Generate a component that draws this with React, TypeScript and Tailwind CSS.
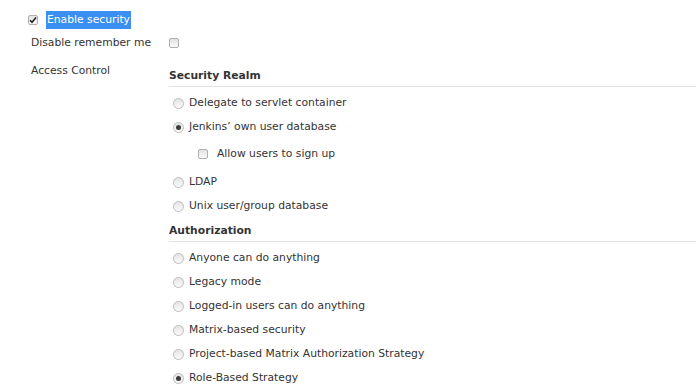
import React from "react";

const Radio = ({ checked = false }: { checked?: boolean }) => (
    <span className="inline-flex h-[11px] w-[11px] shrink-0 items-center justify-center rounded-full border border-[#bdbdbd] bg-gradient-to-b from-[#e4e4e4] to-[#fbfbfb]">
        {checked && <span className="h-[5px] w-[5px] rounded-full bg-[#3a3a3a]" />}
    </span>
);

const Checkbox = ({ checked = false }: { checked?: boolean }) => (
    <span className="inline-flex h-[10px] w-[10px] shrink-0 items-center justify-center rounded-[2px] border border-[#b0b0b0] bg-gradient-to-b from-[#e2e2e2] to-[#f9f9f9]">
        {checked && (
            <svg width="8" height="8" viewBox="0 0 8 8">
                <path d="M1 4.2 L3 6.2 L7 1.5" fill="none" stroke="#222" strokeWidth="1.6" />
            </svg>
        )}
    </span>
);

const RadioRow = ({ label, checked }: { label: string; checked?: boolean }) => (
    <div className="flex h-[24px] items-center pl-[4px]">
        <Radio checked={checked} />
        <span className="ml-[5px]">{label}</span>
    </div>
);

const Header = ({ title }: { title: string }) => (
    <div className="flex h-[21px] items-center border-b border-[#e3e3e3] font-bold">
        {title}
    </div>
);

export default function App() {
    return (
        <div
            className="h-[390px] w-[696px] overflow-hidden bg-white text-[10.75px] text-[#333]"
            style={{ fontFamily: '"DejaVu Sans", sans-serif' }}
        >
            {/* enable security */}
            <div className="flex h-[18px] items-center pl-[28px] mt-[11px]">
                <Checkbox checked />
                <span className="ml-[8px] bg-[#3b8ff0] px-[1px] py-[1px] text-white">Enable security</span>
            </div>

            {/* disable remember me */}
            <div className="mt-[5px] flex h-[18px] items-center pl-[31px]">
                <span className="w-[138px]">Disable remember me</span>
                <Checkbox />
            </div>

            {/* access control */}
            <div className="mt-[10px] flex pl-[31px]">
                <div className="w-[138px] pt-[1px]">Access Control</div>
                <div className="flex-1 pt-[4px]">
                    <Header title="Security Realm" />
                    <div className="mt-[4px]">
                        <RadioRow label="Delegate to servlet container" />
                        <RadioRow label="Jenkins’ own user database" checked />
                        <div className="mt-[3px] flex h-[24px] items-center pl-[29px]">
                            <Checkbox />
                            <span className="ml-[9px]">Allow users to sign up</span>
                        </div>
                        <div className="mt-[4px]">
                            <RadioRow label="LDAP" />
                            <RadioRow label="Unix user/group database" />
                        </div>
                    </div>
                    <div className="mt-[3px]">
                        <Header title="Authorization" />
                    </div>
                    <div className="mt-[4px]">
                        <RadioRow label="Anyone can do anything" />
                        <RadioRow label="Legacy mode" />
                        <RadioRow label="Logged-in users can do anything" />
                        <RadioRow label="Matrix-based security" />
                        <RadioRow label="Project-based Matrix Authorization Strategy" />
                        <RadioRow label="Role-Based Strategy" checked />
                    </div>
                </div>
            </div>
        </div>
    );
}
